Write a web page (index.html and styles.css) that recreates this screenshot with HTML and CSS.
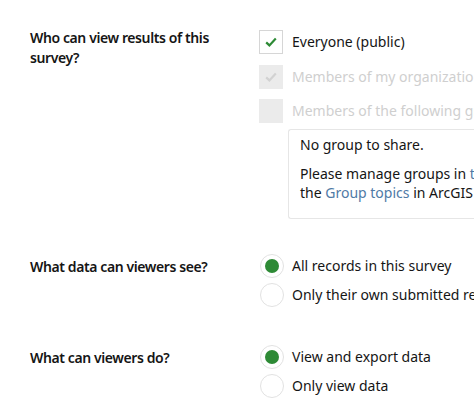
FILE: index.html
```html
<!DOCTYPE html>
<html>
<head>
<meta charset="utf-8">
<link rel="stylesheet" href="styles.css">
</head>
<body>
<div class="page">
  <section class="setting s1">
    <div class="label">Who can view results of this survey?</div>
    <div class="options checks">
      <div class="opt">
        <span class="cb checked"><svg viewBox="0 0 16 16" width="16" height="16"><path d="M3.2 8.4 L6.4 11.4 L12.8 4.6" fill="none" stroke="#2d8a35" stroke-width="2.2"/></svg></span>
        <span class="txt">Everyone (public)</span>
      </div>
      <div class="opt disabled">
        <span class="cb dis-checked"><svg viewBox="0 0 16 16" width="16" height="16"><path d="M3.2 8.4 L6.4 11.4 L12.8 4.6" fill="none" stroke="#d2d2d2" stroke-width="2.2"/></svg></span>
        <span class="txt">Members of my organization</span>
      </div>
      <div class="opt disabled">
        <span class="cb dis"></span>
        <span class="txt">Members of the following groups</span>
      </div>
      <div class="groupbox">
        <p>No group to share.</p>
        <p>Please manage groups in <a href="#">the groups page</a>, or<br>the <a href="#">Group topics</a> in ArcGIS Online.</p>
      </div>
    </div>
  </section>
  <section class="setting s2">
    <div class="label">What data can viewers see?</div>
    <div class="options radios">
      <div class="opt"><span class="rb on"></span><span class="txt">All records in this survey</span></div>
      <div class="opt"><span class="rb"></span><span class="txt">Only their own submitted records</span></div>
    </div>
  </section>
  <section class="setting s3">
    <div class="label">What can viewers do?</div>
    <div class="options radios">
      <div class="opt"><span class="rb on"></span><span class="txt">View and export data</span></div>
      <div class="opt"><span class="rb"></span><span class="txt">Only view data</span></div>
    </div>
  </section>
</div>
</body>
</html>
```
FILE: styles.css
```css
html, body {
  margin: 0;
  padding: 0;
  background: #fff;
  overflow: hidden;
}
body {
  width: 474px;
  height: 411px;
  font-family: "Noto Sans", "Open Sans", sans-serif;
  color: #151515;
}
.page {
  padding: 28px 0 0 30px;
  display: flex;
  flex-direction: column;
}
.setting {
  display: flex;
  align-items: flex-start;
}
.label {
  width: 229px;
  flex: none;
  box-sizing: border-box;
  padding-right: 22px;
  font-size: 14px;
  font-weight: 600;
  line-height: 20px;
  letter-spacing: -0.4px;
}
.options {
  display: flex;
  flex-direction: column;
  white-space: nowrap;
  min-width: 0;
  overflow: hidden;
}
.opt {
  display: flex;
  align-items: center;
  font-size: 14px;
  line-height: 24px;
}
.txt { margin-left: 9px; }
.checks { padding-top: 2px; gap: 10.5px; }
.cb {
  width: 24px;
  height: 24px;
  box-sizing: border-box;
  border: 1px solid #d6d6d6;
  display: flex;
  align-items: center;
  justify-content: center;
  flex: none;
}
.cb.dis-checked, .cb.dis {
  background: #ebebeb;
  border-color: #ebebeb;
}
.disabled .txt { color: #cfcfcf; }
.groupbox {
  margin: -4.5px 0 0 29px;
  border: 1px solid #e6e6e6;
  border-right: none;
  border-radius: 3px 0 0 3px;
  padding: 5px 0 6px 11px;
  font-size: 14px;
  line-height: 19px;
}
.groupbox p { margin: 0 0 10px; }
.groupbox a { color: #4f7aa6; text-decoration: none; }
.s2 { margin-top: 38px; }
.s3 { margin-top: 41px; }
.radios { gap: 5px; margin-top: -3px; padding-left: 1px; }
.rb {
  width: 24px;
  height: 24px;
  box-sizing: border-box;
  border-radius: 50%;
  border: 1px solid #e2e2e2;
  flex: none;
  position: relative;
  background: #fff;
}
.rb.on::after {
  content: "";
  position: absolute;
  left: 4px;
  top: 4px;
  width: 14px;
  height: 14px;
  border-radius: 50%;
  background: #2d8a35;
}
.radios .txt { margin-left: 8px; }
```
